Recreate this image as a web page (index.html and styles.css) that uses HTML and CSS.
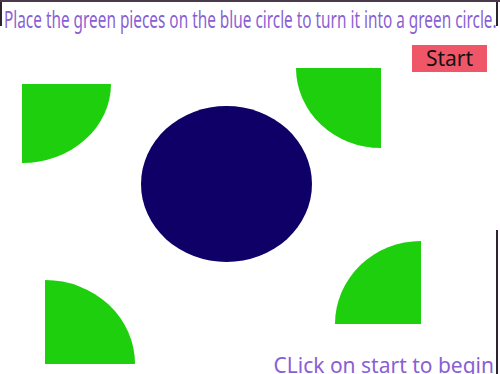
FILE: index.html
```html
<!DOCTYPE html>
<html lang="en">
<head>
  <meta charset="UTF-8">
  <title>Green Circle</title>
  <link rel="stylesheet" href="styles.css">
</head>
<body>
  <main class="game">
    <h1 class="prompt"><span class="prompt-text">Place the green pieces on the blue circle to turn it into a green circle.</span></h1>

    <div class="board">
      <button class="start-button">Start</button>
      <div class="target"></div>
      <div class="piece piece-tl"></div>
      <div class="piece piece-tr"></div>
      <div class="piece piece-bl"></div>
      <div class="piece piece-br"></div>
      <p class="hint">CLick on start to begin</p>
    </div>
  </main>
</body>
</html>
```

FILE: styles.css
```css
:root {
  --green: #1ecf0e;
  --navy: #0f0068;
  --purple: #8a5fd4;
  --edge: #2e2430;
}

* {
  box-sizing: border-box;
}

body {
  margin: 0;
  background: #ffffff;
  font-family: "Noto Sans", "Open Sans", sans-serif;
}

.game {
  position: relative;
  width: 500px;
  height: 374px;
  overflow: hidden;
  border-top: 2px solid #4a3a4c;
}

.game::before,
.game::after {
  content: "";
  position: absolute;
  background: var(--edge);
}

/* left and right edge marks */
.game::before {
  left: 0;
  top: 0;
  width: 2px;
  height: 24px;
}

.game::after {
  right: 2px;
  top: 228px;
  width: 2px;
  height: 146px;
}

.prompt {
  margin: 0 2px 0 0;
  height: 34px;
  padding-left: 4px;
  font-size: 24px;
  font-weight: 400;
  line-height: 34px;
  color: var(--purple);
  white-space: nowrap;
}

.prompt::after {
  content: "";
  position: absolute;
  right: 2px;
  top: 0;
  width: 2px;
  height: 24px;
  background: var(--edge);
}

.prompt-text {
  display: inline-block;
  transform: scaleX(0.64);
  transform-origin: left center;
}

.board {
  position: relative;
  height: 338px;
}

.start-button {
  position: absolute;
  left: 412px;
  top: 9px;
  width: 75px;
  height: 27px;
  padding: 0;
  border: none;
  background: #ef5668;
  color: #111111;
  font-family: inherit;
  font-size: 21px;
  line-height: 27px;
}

.target {
  position: absolute;
  left: 141px;
  top: 70px;
  width: 171px;
  height: 156px;
  border-radius: 50%;
  background: var(--navy);
}

.piece {
  position: absolute;
  background: var(--green);
}

.piece-tl {
  left: 22px;
  top: 48px;
  width: 89px;
  height: 79px;
  border-bottom-right-radius: 100% 100%;
}

.piece-tr {
  left: 296px;
  top: 32px;
  width: 85px;
  height: 80px;
  border-bottom-left-radius: 100% 100%;
}

.piece-bl {
  left: 45px;
  top: 244px;
  width: 90px;
  height: 84px;
  border-top-right-radius: 100% 100%;
}

.piece-br {
  left: 335px;
  top: 205px;
  width: 86px;
  height: 83px;
  border-top-left-radius: 100% 100%;
}

.hint {
  position: absolute;
  right: 6px;
  bottom: -5px;
  margin: 0;
  font-size: 21px;
  line-height: 28px;
  color: var(--purple);
  white-space: nowrap;
}
```
